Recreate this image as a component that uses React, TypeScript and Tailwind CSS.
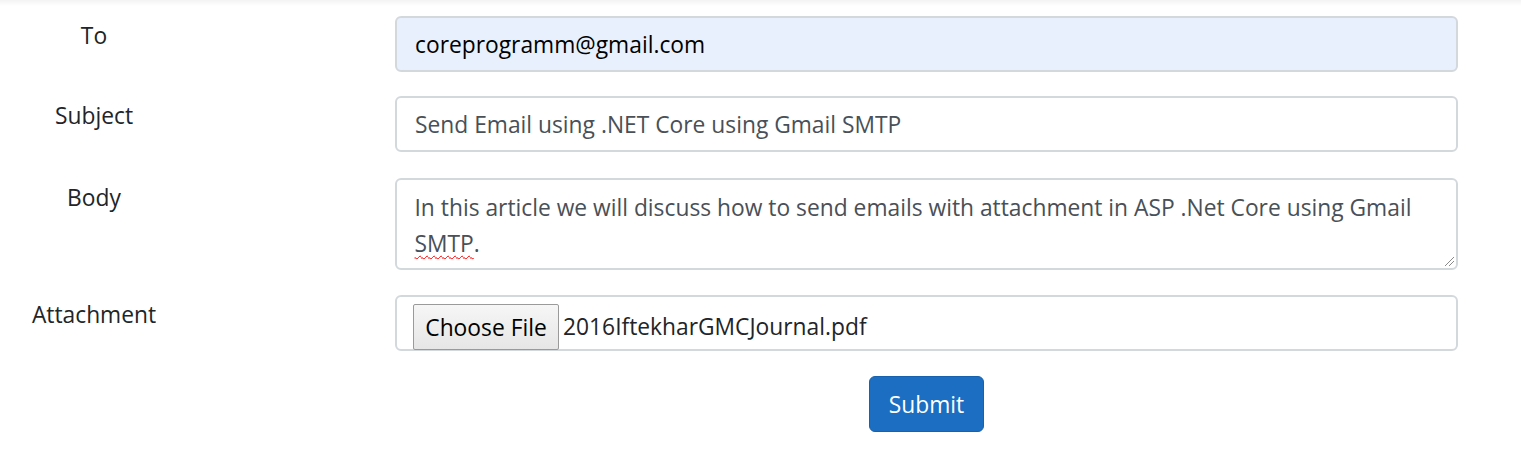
import React from "react";

const font = { fontFamily: '"Open Sans", "Noto Sans", sans-serif' };

function Label({ children }: { children: React.ReactNode }) {
  return (
    <div className="w-[188px] shrink-0 text-center text-[22.8px] leading-[36px] pt-[2px] text-[#212529]">
      {children}
    </div>
  );
}

export default function App() {
  return (
    <div className="w-[1521px] h-[463px] bg-white overflow-hidden" style={font}>
      <div className="h-[6px] bg-gradient-to-b from-[#f3f3f3] to-white" />
      <div className="pt-[10px] pr-[63px] flex flex-col">
        {/* To */}
        <div className="flex mb-[24px]">
          <Label>To</Label>
          <div className="ml-[207px] flex-1 h-[56px] rounded-[6px] border-2 border-[#d3d8dd] bg-[#e8f0fe] px-[18px] pt-[3px] flex items-center text-[22.8px] text-black whitespace-nowrap">
            coreprogramm@gmail.com
          </div>
        </div>
        {/* Subject */}
        <div className="flex mb-[26px]">
          <Label>Subject</Label>
          <div className="ml-[207px] flex-1 h-[56px] rounded-[6px] border-2 border-[#d3d8dd] bg-white px-[18px] pt-[2px] flex items-center text-[22.8px] text-[#495057] whitespace-nowrap">
            Send Email using .NET Core using Gmail SMTP
          </div>
        </div>
        {/* Body */}
        <div className="flex mb-[25px]">
          <Label>Body</Label>
          <div className="relative ml-[207px] flex-1 h-[92px] rounded-[6px] border-2 border-[#d3d8dd] bg-white px-[17.5px] pt-[9.5px] text-[22.8px] leading-[36px] text-[#495057] whitespace-nowrap">
            <div>In this article we will discuss how to send emails with attachment in ASP .Net Core using Gmail</div>
            <div>
              <span className="underline decoration-wavy decoration-[#ff0000] decoration-[1px] underline-offset-[3px]">SMTP</span>.
            </div>
            <svg className="absolute right-[1px] bottom-[1px]" width="12" height="12" viewBox="0 0 12 12">
              <line x1="11" y1="2" x2="2" y2="11" stroke="#8a8a8a" strokeWidth="1" />
              <line x1="11" y1="6" x2="6" y2="11" stroke="#8a8a8a" strokeWidth="1" />
            </svg>
          </div>
        </div>
        {/* Attachment */}
        <div className="flex mb-[25px]">
          <Label>Attachment</Label>
          <div className="ml-[207px] flex-1 h-[56px] rounded-[6px] border-2 border-[#d3d8dd] bg-white pl-[16px] flex items-center text-[22.8px] text-[#212529] whitespace-nowrap">
            <div className="h-[46px] w-[146px] mt-[7px] pt-[3px] self-start border border-[#9a9a9a] rounded-[2px] bg-gradient-to-b from-[#f6f6f6] to-[#e6e6e6] flex items-center justify-center text-black">
              Choose File
            </div>
            <span className="ml-[4px] pt-[8px]">2016IftekharGMCJournal.pdf</span>
          </div>
        </div>
        {/* Submit */}
        <div className="flex">
          <div className="w-[188px] shrink-0" />
          <div className="ml-[207px] flex-1 flex justify-center">
            <button className="w-[115px] h-[56px] pt-[2px] rounded-[6px] border-[1.5px] border-[#1861ac] bg-[#1b6ec2] text-white text-[22.8px] flex items-center justify-center">
              Submit
            </button>
          </div>
        </div>
      </div>
    </div>
  );
}
